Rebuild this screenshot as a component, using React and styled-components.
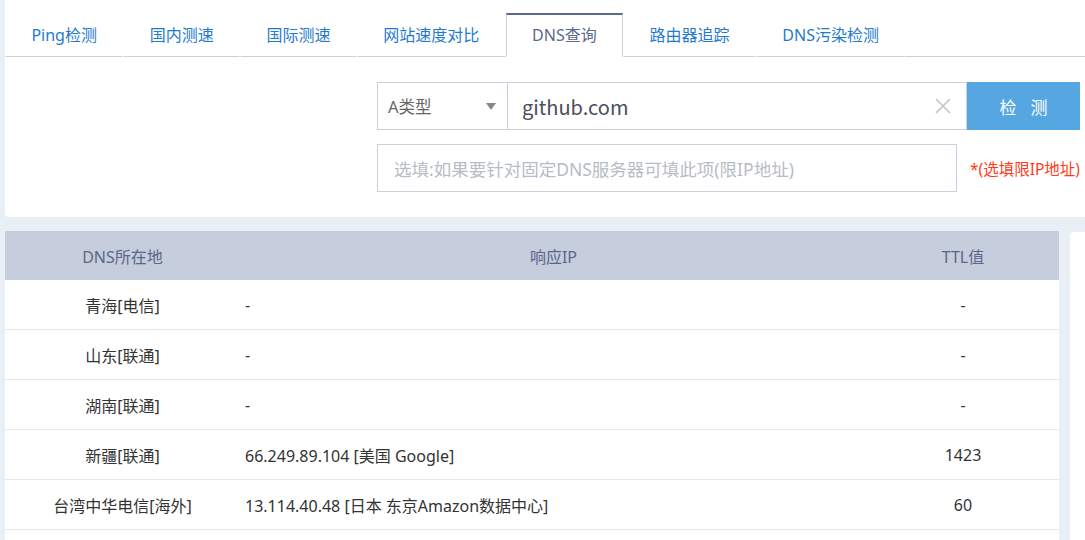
import React from 'react';
import styled, { createGlobalStyle } from 'styled-components';

const GlobalStyle = createGlobalStyle`
  html, body {
    margin: 0;
    padding: 0;
    background: #e9eff7;
    overflow: hidden;
  }
  body {
    font-family: "Noto Sans", "Noto Sans CJK SC", sans-serif;
  }
`;

const Page = styled.div`
  width: 1085px;
  height: 540px;
  padding-left: 5px;
  box-sizing: border-box;
  overflow: hidden;
`;

const TopCard = styled.div`
  width: 1100px;
  height: 217px;
  background: #fff;
  border-radius: 0 0 4px 4px;
  box-sizing: border-box;
`;

const TabBar = styled.div`
  display: flex;
  align-items: flex-end;
  height: 57px;
  padding-top: 12px;
  box-sizing: border-box;
  border-bottom: 1px solid #c9d1de;
`;

const Tab = styled.div`
  height: 44px;
  margin-bottom: -1px;
  padding: 0 25.4px 3px;
  display: flex;
  align-items: center;
  justify-content: center;
  font-size: 16px;
  box-sizing: border-box;
  color: ${p => (p.$active ? '#5b6a8a' : '#1f7ad0')};
  background: #fff;
  border-top: 2px solid ${p => (p.$active ? '#5b6a8a' : 'transparent')};
  border-left: 1px solid ${p => (p.$active ? '#c9d1de' : 'transparent')};
  border-right: 1px solid ${p => (p.$active ? '#c9d1de' : 'transparent')};
  border-bottom: 1px solid ${p => (p.$active ? '#fff' : '#c9d1de')};
`;

const Form = styled.div`
  padding: 25px 0 0 372px;
  display: flex;
  flex-direction: column;
  gap: 14px;
`;

const Row = styled.div`
  display: flex;
  align-items: center;
`;

const Select = styled.div`
  width: 130px;
  height: 48px;
  box-sizing: border-box;
  border: 1px solid #c9d1de;
  border-right: none;
  display: flex;
  align-items: center;
  justify-content: space-between;
  padding: 0 11px 0 10px;
  font-size: 16.5px;
  color: #666;
`;

const Caret = styled.span`
  width: 0;
  height: 0;
  border-left: 5px solid transparent;
  border-right: 5px solid transparent;
  border-top: 7px solid #888;
`;

const Domain = styled.div`
  width: 460px;
  height: 48px;
  box-sizing: border-box;
  border: 1px solid #c9d1de;
  display: flex;
  align-items: center;
  justify-content: space-between;
  padding: 0 14px 0 14px;
  font-size: 20px;
  font-family: "Noto Sans CJK SC", sans-serif;
  color: #4a4f5c;
`;

const Button = styled.div`
  width: 113px;
  height: 48px;
  background: #56a7e1;
  color: #fff;
  font-size: 17px;
  letter-spacing: 14px;
  text-indent: 14px;
  display: flex;
  align-items: center;
  justify-content: center;
`;

const DnsInput = styled.div`
  width: 580px;
  height: 48px;
  box-sizing: border-box;
  border: 1px solid #c9d1de;
  display: flex;
  align-items: center;
  padding-left: 16px;
  font-size: 17.5px;
  color: #b8bcc4;
`;

const Note = styled.span`
  margin-left: 13px;
  font-size: 15.5px;
  color: #ff3b1a;
  white-space: nowrap;
`;

const Bottom = styled.div`
  display: flex;
  margin-top: 14px;
  gap: 11px;
`;

const TableCard = styled.div`
  width: 1054px;
  background: #fff;
  flex: none;
`;

const SideCard = styled.div`
  flex: 1;
  margin-top: 1px;
  height: 320px;
  background: #fff;
  border-radius: 4px 0 0 0;
`;

const Table = styled.table`
  width: 100%;
  border-collapse: collapse;
  table-layout: fixed;
`;

const Th = styled.th`
  height: 49px;
  padding: 0;
  background: #c6cddd;
  color: #5b6787;
  font-weight: normal;
  font-size: 16px;
  text-align: center;
  width: ${p => p.$w || 'auto'};
`;

const Td = styled.td`
  height: 49px;
  border-bottom: 1px solid #e4e8ee;
  font-size: 16px;
  color: #333;
  text-align: ${p => p.$align || 'center'};
  padding: ${p => (p.$align === 'left' ? '0 0 0 5px' : '0')};
`;

const tabs = ['Ping检测', '国内测速', '国际测速', '网站速度对比', 'DNS查询', '路由器追踪', 'DNS污染检测'];

const rows = [
  ['青海[电信]', '-', '-'],
  ['山东[联通]', '-', '-'],
  ['湖南[联通]', '-', '-'],
  ['新疆[联通]', '66.249.89.104 [美国 Google]', '1423'],
  ['台湾中华电信[海外]', '13.114.40.48 [日本 东京Amazon数据中心]', '60'],
  ['', '', ''],
];

const ClearIcon = () => (
  <svg width="18" height="18" viewBox="0 0 18 18">
    <path d="M2 2 L16 16 M16 2 L2 16" stroke="#c4c4c4" strokeWidth="1.6" fill="none" />
  </svg>
);

export default function App() {
  return (
    <>
      <GlobalStyle />
      <Page>
        <TopCard>
          <TabBar>
            {tabs.map(t => (
              <Tab key={t} $active={t === 'DNS查询'}>{t}</Tab>
            ))}
          </TabBar>
          <Form>
            <Row>
              <Select>A类型<Caret /></Select>
              <Domain>github.com<ClearIcon /></Domain>
              <Button>检测</Button>
            </Row>
            <Row>
              <DnsInput>选填:如果要针对固定DNS服务器可填此项(限IP地址)</DnsInput>
              <Note>*(选填限IP地址)</Note>
            </Row>
          </Form>
        </TopCard>
        <Bottom>
          <TableCard>
            <Table>
              <thead>
                <tr>
                  <Th $w="235px">DNS所在地</Th>
                  <Th>响应IP</Th>
                  <Th $w="192px">TTL值</Th>
                </tr>
              </thead>
              <tbody>
                {rows.map((r, i) => (
                  <tr key={i}>
                    <Td>{r[0]}</Td>
                    <Td $align="left">{r[1]}</Td>
                    <Td>{r[2]}</Td>
                  </tr>
                ))}
              </tbody>
            </Table>
          </TableCard>
          <SideCard />
        </Bottom>
      </Page>
    </>
  );
}
